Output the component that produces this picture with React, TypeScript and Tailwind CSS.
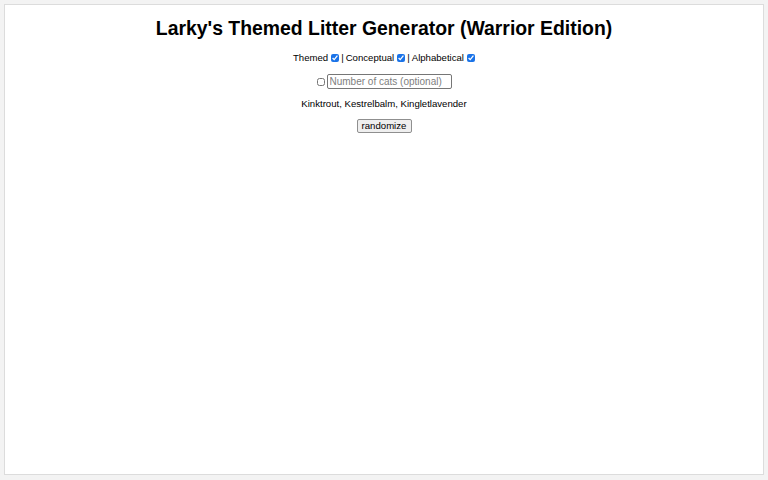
import { FC } from 'react';

const options = ['Themed', 'Conceptual', 'Alphabetical'];

const App: FC = () => {
  return (
    <div className="h-[480px] w-[768px] bg-[#f3f3f3] p-[4px] font-['Liberation_Sans',Arial,sans-serif] text-black">
      <div className="flex h-[471px] flex-col items-center border border-[#dcdcdc] bg-white">
        <h1 className="mt-[11px] text-[19.4px] font-bold leading-[24px]">
          Larky's Themed Litter Generator (Warrior Edition)
        </h1>

        <div className="mt-[12px] flex items-center text-[9.6px] leading-[12px]">
          {options.map((opt, i) => (
            <span key={opt} className="flex items-center">
              {i > 0 && <span className="mx-[2px]">|</span>}
              {opt}
              <input type="checkbox" defaultChecked className="ml-[3px] h-[8px] w-[8px] accent-[#1a73e8]" />
            </span>
          ))}
        </div>

        <div className="mt-[10px] flex items-center">
          <input type="checkbox" className="mr-[2px] h-[8px] w-[8px]" />
          <input
            type="text"
            placeholder="Number of cats (optional)"
            className="h-[15px] w-[125px] rounded-[2px] border border-[#767676] px-[2px] text-[10px] leading-[12px] placeholder:text-[#808080]"
          />
        </div>

        <p className="mt-[9px] text-[9.6px] leading-[12px]">Kinktrout, Kestrelbalm, Kingletlavender</p>

        <button className="mt-[9px] h-[14px] w-[55px] rounded-[2px] border border-[#8f8f8f] bg-[#efefef] text-[9.6px] leading-[12px]">
          randomize
        </button>
      </div>
    </div>
  );
};

export default App;
